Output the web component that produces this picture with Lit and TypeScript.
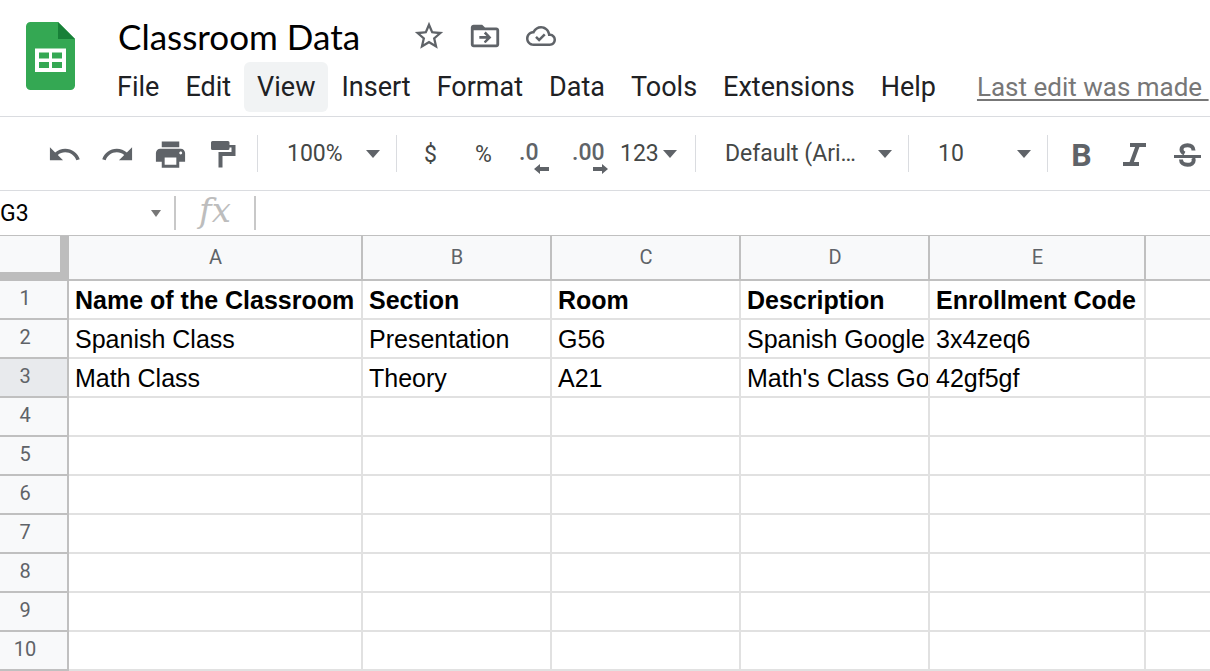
import { LitElement, html, css, svg } from "lit";
import { customElement } from "lit/decorators.js";
import { classMap } from "lit/directives/class-map.js";

const MENUS = ["File", "Edit", "View", "Insert", "Format", "Data", "Tools", "Extensions", "Help"];
const COLUMNS = ["A", "B", "C", "D", "E", ""];
const ROW_COUNT = 10;
const ACTIVE_ROW = 3;
const DATA: string[][] = [
  ["Name of the Classroom", "Section", "Room", "Description", "Enrollment Code"],
  ["Spanish Class", "Presentation", "G56", "Spanish Google", "3x4zeq6"],
  ["Math Class", "Theory", "A21", "Math's Class Go", "42gf5gf"],
];

const icon = (size: number, body: unknown) =>
  html`<svg width=${size} height=${size} viewBox="0 0 24 24" fill="currentColor" aria-hidden="true">${body}</svg>`;

const caret = html`<svg class="caret" width="14" height="8" viewBox="0 0 14 8" fill="currentColor" aria-hidden="true"><path d="M0 0h14L7 8z"/></svg>`;

const STAR = svg`<path d="M22 9.24l-7.19-.62L12 2 9.19 8.63 2 9.24l5.46 4.73L5.82 21 12 17.27 18.18 21l-1.63-7.03L22 9.24zM12 15.4l-3.76 2.27 1-4.28-3.32-2.88 4.38-.38L12 6.1l1.71 4.04 4.38.38-3.32 2.88 1 4.28L12 15.4z"/>`;
const MOVE = svg`<path d="M20 6h-8l-2-2H4c-1.1 0-2 .9-2 2v12c0 1.1.9 2 2 2h16c1.1 0 2-.9 2-2V8c0-1.1-.9-2-2-2zm0 12H4V8h16v10zm-8.200-1.300L11.200 15.800 13 14H8v-2h5l-1.800-1.800 1.300-1.300L16.500 13l-4 4z"/>`;
const CLOUD = svg`<path d="M19.350 10.040C18.670 6.590 15.640 4 12 4 9.110 4 6.600 5.640 5.350 8.040 2.340 8.360 0 10.910 0 14c0 3.310 2.690 6 6 6h13c2.760 0 5-2.240 5-5 0-2.640-2.050-4.780-4.650-4.960zM19 18H6c-2.210 0-4-1.790-4-4 0-2.050 1.530-3.760 3.560-3.970l1.070-.11.5-.95C8.080 7.140 9.940 6 12 6c2.620 0 4.880 1.860 5.390 4.430l.3 1.500 1.530.11c1.560.1 2.780 1.410 2.780 2.960 0 1.650-1.350 3-3 3zm-8.500-4.300l-1.800-1.800-1.400 1.400 3.200 3.200 5.200-5.200-1.400-1.400z"/>`;
const UNDO = svg`<path d="M12.500 8c-2.650 0-5.050.99-6.900 2.600L2 7v9h9l-3.620-3.620c1.390-1.160 3.160-1.880 5.120-1.880 3.540 0 6.550 2.310 7.600 5.500l2.370-.78C21.080 11.030 17.150 8 12.500 8z"/>`;
const REDO = svg`<path d="M18.400 10.600C16.550 8.990 14.150 8 11.500 8c-4.650 0-8.580 3.030-9.960 7.220L3.900 16c1.050-3.190 4.050-5.500 7.600-5.500 1.950 0 3.730.72 5.120 1.880L13 16h9V7l-3.600 3.600z"/>`;
const PRINT = svg`<path d="M19 8H5c-1.660 0-3 1.340-3 3v6h4v4h12v-4h4v-6c0-1.660-1.340-3-3-3zm-3 11H8v-5h8v5zm3-7c-.55 0-1-.45-1-1s.45-1 1-1 1 .45 1 1-.45 1-1 1zm-1-9H6v4h12V3z"/>`;

@customElement("app-root")
export class AppRoot extends LitElement {
  static styles = css`
    :host {
      display: block;
      min-height: 100vh;
      overflow: hidden;
      background: #fff;
      color: #202124;
      font-family: Roboto, "Liberation Sans", sans-serif;
    }
    * { box-sizing: border-box; }
    svg { display: block; flex: none; }
    button, select, input {
      margin: 0;
      padding: 0;
      border: 0;
      background: none;
      color: inherit;
      font: inherit;
      border-radius: 0;
    }
    .header {
      display: flex;
      height: 117px;
      padding-left: 26px;
      border-bottom: 1px solid #dadce0;
    }
    .logo { margin-top: 22px; }
    .heading { flex: 1; min-width: 0; padding-left: 29px; }
    .title-row {
      display: flex;
      align-items: center;
      height: 62px;
      padding: 10px 0 0 14px;
    }
    .title {
      margin: 0;
      width: 294px;
      font: 400 35px/48px Lato, sans-serif;
      color: #000;
      white-space: nowrap;
    }
    .title-actions {
      display: flex;
      align-items: center;
      gap: 22px;
      height: 48px;
      color: #5f6368;
    }
    .title-actions button {
      display: grid;
      place-items: center;
      width: 34px;
      height: 34px;
    }
    .menubar {
      display: flex;
      align-items: center;
      font-size: 27px;
      line-height: 50px;
      white-space: nowrap;
    }
    .menu {
      height: 50px;
      padding: 0 13px;
      border-radius: 6px;
    }
    .menu.hover { background: #f1f3f4; }
    .last-edit {
      margin-left: 28px;
      font-size: 26px;
      color: #777;
      text-decoration: underline;
      text-decoration-thickness: 2px;
      text-underline-offset: 3px;
    }
    .toolbar {
      display: flex;
      align-items: center;
      height: 74px;
      padding-left: 38px;
      border-bottom: 1px solid #dadce0;
      color: #5f6368;
      font-size: 23px;
      line-height: 28px;
      white-space: nowrap;
    }
    .tool {
      flex: none;
      display: flex;
      align-items: center;
      justify-content: center;
      width: 53px;
      height: 48px;
      padding-top: 2px;
    }
    .tool.places { justify-content: flex-start; padding: 0 0 0 9px; }
    .text { color: #444746; }
    .divider {
      flex: none;
      width: 1px;
      height: 37px;
      margin: 0 7px;
      background: #dadce0;
    }
    .drop {
      flex: none;
      display: grid;
      align-items: center;
      width: 124px;
      height: 48px;
    }
    .drop.wide { width: 198px; }
    .drop select, .drop .caret { grid-area: 1 / 1; }
    .drop select {
      appearance: none;
      width: 100%;
      height: 48px;
      padding-left: 22px;
      color: #444746;
    }
    .drop .caret {
      justify-self: end;
      margin-right: 9px;
      pointer-events: none;
    }
    .formats {
      flex: none;
      display: flex;
      align-items: center;
      gap: 4px;
      width: 72px;
      height: 48px;
      padding-left: 4px;
    }
    .formats .label { color: #444746; }
    .decimal {
      display: grid;
      font-weight: 500;
      line-height: 22px;
      padding-top: 8px;
    }
    .decimal svg { justify-self: end; }
    .decimal .less { margin-right: -11px; }
    .decimal .more { margin-right: -3px; }
    .bold { font-size: 32px; font-weight: 700; }
    .formula {
      display: flex;
      align-items: center;
      height: 45px;
      border-bottom: 1px solid #c0c0c0;
    }
    .name-box {
      width: 150px;
      height: 44px;
      font-size: 23px;
      color: #000;
    }
    .name-caret { width: 24px; color: #777; }
    .bar { flex: none; width: 2px; height: 34px; background: #c8c8c8; }
    .fx {
      width: 78px;
      height: 44px;
      text-align: center;
      font: italic 34px/38px "DejaVu Serif", serif;
      color: #bdbdbd;
    }
    .formula-input { flex: 1; min-width: 0; height: 44px; padding: 0 12px; font-size: 23px; }
    .sheet {
      width: 100%;
      table-layout: fixed;
      border-collapse: separate;
      border-spacing: 0;
    }
    .w-head { width: 69px; }
    .w-a { width: 294px; }
    .w-std { width: 189px; }
    .w-e { width: 216px; }
    .sheet th {
      padding: 0;
      background: #f8f9fa;
      border: solid #c0c0c0;
      border-width: 0 2px 2px 0;
      color: #5f6368;
      font-size: 20px;
      font-weight: 400;
      line-height: 24px;
    }
    .sheet .col { height: 45px; padding: 0 0 2px 1px; }
    .sheet .corner {
      height: 45px;
      border-color: #bdbdbd;
      border-width: 0 9px 9px 0;
    }
    .sheet .row { padding: 0 17px 4px 0; }
    .sheet .row.active { background: #e8eaed; }
    .sheet td {
      height: 39px;
      padding: 0 0 0 6px;
      overflow: hidden;
      border: solid #e1e1e1;
      border-width: 0 2px 2px 0;
      color: #000;
      font: 25px/28px "Liberation Sans", Arial, sans-serif;
      white-space: nowrap;
    }
    .sheet .strong { font-weight: 700; }
    .sheet .col:last-child, .sheet td:last-child { border-right-width: 0; }
  `;

  private renderHeader() {
    return html`
      <header class="header">
        <svg class="logo" width="49" height="68" viewBox="0 0 49 68" role="img" aria-label="Sheets">
          <path fill="#34a853" d="M4.500 0H32l17 17v46.500a4.500 4.500 0 0 1-4.500 4.500h-40A4.500 4.500 0 0 1 0 63.500v-59A4.500 4.500 0 0 1 4.500 0z"/>
          <path fill="#188038" d="M32 0l17 17H32z"/>
          <path fill="#fff" fill-rule="evenodd" d="M9 26.500h31V50H9zM13 30.500v6h10v-6zm13 0v6h10v-6zM13 40v6h10v-6zm13 0v6h10v-6z"/>
        </svg>
        <div class="heading">
          <div class="title-row">
            <h1 class="title">Classroom Data</h1>
            <div class="title-actions">
              <button aria-label="Star">${icon(34, STAR)}</button>
              <button aria-label="Move">${icon(34, MOVE)}</button>
              <button aria-label="Document status">${icon(30, CLOUD)}</button>
            </div>
          </div>
          <nav class="menubar">
            ${MENUS.map((m) => html`<button class=${classMap({ menu: true, hover: m === "View" })}>${m}</button>`)}
            <a class="last-edit" href="#history">Last edit was made&nbsp;</a>
          </nav>
        </div>
      </header>`;
  }

  private renderToolbar() {
    const divider = html`<span class="divider"></span>`;
    return html`
      <div class="toolbar" role="toolbar">
        <button class="tool" aria-label="Undo">${icon(35, UNDO)}</button>
        <button class="tool" aria-label="Redo">${icon(35, REDO)}</button>
        <button class="tool" aria-label="Print">${icon(35, PRINT)}</button>
        <button class="tool" aria-label="Paint format">
          <svg width="25" height="27" viewBox="0 0 25 27" fill="currentColor" aria-hidden="true">
            <path d="M1.500 0h15.500a1.500 1.500 0 0 1 1.500 1.500V4h6v11h-13v11.500h-4V11h13V6.500h-2V7.500a1.500 1.500 0 0 1-1.500 1.500h-15.500A1.500 1.500 0 0 1 0 7.500v-6A1.500 1.500 0 0 1 1.500 0z"/>
          </svg>
        </button>
        ${divider}
        <div class="drop"><select aria-label="Zoom"><option>100%</option></select>${caret}</div>
        ${divider}
        <button class="tool text">$</button>
        <button class="tool text">%</button>
        <button class="tool places" aria-label="Decrease decimal places">
          <span class="decimal">.0<svg class="less" width="15" height="10" viewBox="0 0 15 10" fill="currentColor"><path d="M0 5l6-5v3h9v4H6V10z"/></svg></span>
        </button>
        <button class="tool places" aria-label="Increase decimal places">
          <span class="decimal">.00<svg class="more" width="15" height="10" viewBox="0 0 15 10" fill="currentColor"><path d="M15 5L9 0v3H0v4h9V10z"/></svg></span>
        </button>
        <button class="formats"><span class="label">123</span>${caret}</button>
        ${divider}
        <div class="drop wide"><select aria-label="Font"><option>Default (Ari…</option></select>${caret}</div>
        ${divider}
        <div class="drop"><select aria-label="Font size"><option>10</option></select>${caret}</div>
        ${divider}
        <button class="tool bold">B</button>
        <button class="tool" aria-label="Italic">
          <svg width="23" height="23" viewBox="0 0 23 23" fill="none" stroke="currentColor" stroke-width="4" aria-hidden="true"><path d="M7 2h16M0 21h16M15 2L8 21"/></svg>
        </button>
        <button class="tool" aria-label="Strikethrough">
          <svg width="27" height="24" viewBox="0 0 27 24" fill="none" stroke="currentColor" aria-hidden="true">
            <path stroke-width="3" d="M0 13.500h27"/>
            <path stroke-width="4" d="M19.500 7.500C19.500 4 17 2.200 13.500 2.200S7.500 4 7.500 6.500c0 1.800 1 3 3 4M7 16.500c0 3.500 2.800 5.300 6.500 5.300s6.200-1.800 6.200-4.600c0-1-.2-1.700-.7-2.400"/>
          </svg>
        </button>
      </div>`;
  }

  private renderFormulaBar() {
    return html`
      <div class="formula">
        <input class="name-box" aria-label="Name box" value="G3" />
        <button class="name-caret" aria-label="Named ranges">
          <svg width="11" height="7" viewBox="0 0 11 7" fill="currentColor"><path d="M1 0h10L6 7z"/></svg>
        </button>
        <span class="bar"></span>
        <span class="fx">fx</span>
        <span class="bar"></span>
        <input class="formula-input" aria-label="Formula" />
      </div>`;
  }

  private renderSheet() {
    const rows = Array.from({ length: ROW_COUNT }, (_, i) => i + 1);
    return html`
      <table class="sheet">
        <colgroup>
          <col class="w-head" /><col class="w-a" /><col class="w-std" /><col class="w-std" /><col class="w-std" /><col class="w-e" /><col />
        </colgroup>
        <thead>
          <tr><th class="corner"></th>${COLUMNS.map((c) => html`<th class="col" scope="col">${c}</th>`)}</tr>
        </thead>
        <tbody>
          ${rows.map((n) => html`<tr>
            <th scope="row" class=${classMap({ row: true, active: n === ACTIVE_ROW })}>${n}</th>
            ${COLUMNS.map((_, c) => html`<td class=${classMap({ strong: n === 1 })}>${DATA[n - 1]?.[c] ?? ""}</td>`)}
          </tr>`)}
        </tbody>
      </table>`;
  }

  render() {
    return html`${this.renderHeader()}${this.renderToolbar()}${this.renderFormulaBar()}<main>${this.renderSheet()}</main>`;
  }
}
